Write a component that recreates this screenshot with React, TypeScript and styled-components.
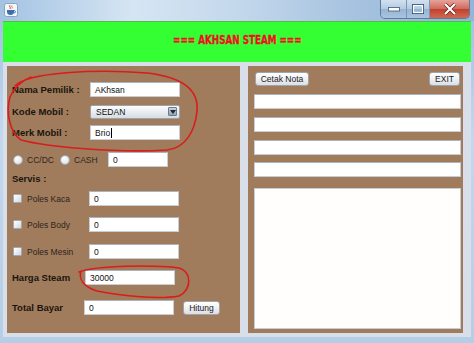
import React from 'react'
import styled, { createGlobalStyle } from 'styled-components'

const GlobalStyle = createGlobalStyle`
  html, body {
    margin: 0;
    padding: 0;
    background: #b9d1ea;
  }
  * {
    box-sizing: border-box;
  }
`

const App: React.FC = () => {
  return (
    <>
      <GlobalStyle />
      <StyledWindow>
        <StyledTitleBar>
          <JavaIcon />
          <StyledControls>
            <StyledControl $w={26}>
              <svg width='12' height='5' viewBox='0 0 12 5'>
                <rect x='0.5' y='0.5' width='11' height='3.5' fill='#fff' stroke='#3b5877' strokeWidth='0.8' />
              </svg>
            </StyledControl>
            <StyledControl $w={23}>
              <svg width='12' height='10' viewBox='0 0 12 10'>
                <rect x='1' y='1' width='10' height='8' fill='none' stroke='#3b5877' strokeWidth='2' />
                <rect x='1.5' y='1.5' width='9' height='7' fill='none' stroke='#fff' strokeWidth='1.2' />
              </svg>
            </StyledControl>
            <StyledClose>
              <svg width='14' height='12' viewBox='0 0 14 12'>
                <path d='M2 1 L12 11 M12 1 L2 11' stroke='#6b1f16' strokeWidth='3.6' />
                <path d='M2 1 L12 11 M12 1 L2 11' stroke='#fff' strokeWidth='2.2' />
              </svg>
            </StyledClose>
          </StyledControls>
        </StyledTitleBar>

        <StyledContent>
          <StyledHeader>
            <StyledTitle>=== AKHSAN STEAM ===</StyledTitle>
          </StyledHeader>

          <StyledBody>
            <StyledLeftPanel>
              <StyledRow $mt={16}>
                <StyledLabel $w={78}>Nama Pemilik :</StyledLabel>
                <StyledField $w={90}>AKhsan</StyledField>
              </StyledRow>
              <StyledRow $mt={7}>
                <StyledLabel $w={78}>Kode Mobil :</StyledLabel>
                <StyledCombo>
                  <span>SEDAN</span>
                  <StyledComboArrow>
                    <svg width='6' height='4' viewBox='0 0 6 4'>
                      <path d='M0 0 H6 L3 4 Z' fill='#1d2733' />
                    </svg>
                  </StyledComboArrow>
                </StyledCombo>
              </StyledRow>
              <StyledRow $mt={6}>
                <StyledLabel $w={78}>Merk Mobil :</StyledLabel>
                <StyledField $w={90}>Brio<StyledCaret /></StyledField>
              </StyledRow>

              <StyledRow $mt={12} $pl={6}>
                <StyledRadio />
                <StyledSmallText $w={33}>CC/DC</StyledSmallText>
                <StyledRadio />
                <StyledSmallText $w={34}>CASH</StyledSmallText>
                <StyledField $w={60}>0</StyledField>
              </StyledRow>

              <StyledRow $mt={4}>
                <StyledLabel $w={78}>Servis :</StyledLabel>
              </StyledRow>

              <StyledRow $mt={5} $pl={6}>
                <StyledCheck />
                <StyledSmallText $w={62}>Poles Kaca</StyledSmallText>
                <StyledField $w={90}>0</StyledField>
              </StyledRow>
              <StyledRow $mt={11} $pl={6}>
                <StyledCheck />
                <StyledSmallText $w={62}>Poles Body</StyledSmallText>
                <StyledField $w={90}>0</StyledField>
              </StyledRow>
              <StyledRow $mt={12} $pl={6}>
                <StyledCheck />
                <StyledSmallText $w={62}>Poles Mesin</StyledSmallText>
                <StyledField $w={90}>0</StyledField>
              </StyledRow>

              <StyledRow $mt={11}>
                <StyledLabel $w={73}>Harga Steam</StyledLabel>
                <StyledField $w={90}>30000</StyledField>
              </StyledRow>
              <StyledRow $mt={15}>
                <StyledLabel $w={72}>Total Bayar</StyledLabel>
                <StyledField $w={90}>0</StyledField>
                <StyledButton $w={37} $ml={9}>Hitung</StyledButton>
              </StyledRow>

              <StyledScribble width='233' height='267' viewBox='0 0 233 267'>
                <path
                  d='M8 20 C20 6, 90 3, 140 7 C175 11, 192 24, 190 45 C188 66, 178 82, 160 84 C110 87, 40 81, 14 74 C2 66, -1 45, 3 31 C7 22, 14 15, 24 11'
                />
                <path d='M72 206 C90 199, 150 199, 172 202 C185 206, 185 223, 172 230 C150 234, 110 229, 90 225 C78 221, 71 214, 74 205' />
              </StyledScribble>
            </StyledLeftPanel>

            <StyledRightPanel>
              <StyledButtonBar>
                <StyledButton $w={54}>Cetak Nota</StyledButton>
                <StyledButton $w={31}>EXIT</StyledButton>
              </StyledButtonBar>
              <StyledWideField $mt={8} />
              <StyledWideField $mt={8} />
              <StyledWideField $mt={8} />
              <StyledWideField $mt={7} />
              <StyledTextArea />
            </StyledRightPanel>
          </StyledBody>
        </StyledContent>
      </StyledWindow>
    </>
  )
}

const JavaIcon: React.FC = () => (
  <StyledIcon width='14' height='14' viewBox='0 0 14 14'>
    <rect x='0.5' y='0.5' width='13' height='13' rx='2' fill='#f3f6fa' stroke='#8aa3bf' />
    <path d='M6 2 C4.5 3.5, 7.5 4.5, 6 6' stroke='#e2572a' strokeWidth='1' fill='none' />
    <path d='M8 2.5 C7 3.5, 9 4.5, 8 5.5' stroke='#e2572a' strokeWidth='0.8' fill='none' />
    <path d='M3 7 H10 V9 C10 11, 8.5 12, 6.5 12 C4.5 12, 3 11, 3 9 Z' fill='#3b6fb0' />
    <path d='M10 7.5 C12 7.5, 12 10, 10 10' stroke='#3b6fb0' strokeWidth='0.9' fill='none' />
  </StyledIcon>
)

const StyledWindow = styled.div`
  width: 474px;
  height: 343px;
  display: flex;
  flex-direction: column;
  background: linear-gradient(180deg, #9fbfdf 0%, #c3d8ee 40%, #b5cde6 100%);
  font-family: 'Liberation Sans', Arial, sans-serif;
  overflow: hidden;
`

const StyledTitleBar = styled.div`
  height: 21px;
  flex: none;
  display: flex;
  justify-content: space-between;
  align-items: flex-start;
  padding: 0 4px 0 4px;
  background: linear-gradient(90deg, #a3c3e3 0%, #d6e5f3 28%, #c4d8ec 50%, #a6c2df 75%, #94b5d8 100%);
`

const StyledIcon = styled.svg`
  margin-top: 3px;
`

const StyledControls = styled.div`
  display: flex;
  height: 19px;
  border: 1px solid #5e7a99;
  border-top: 0;
  border-radius: 0 0 5px 5px;
  overflow: hidden;
`

const StyledControl = styled.div<{ $w: number }>`
  width: ${props => props.$w}px;
  height: 100%;
  display: flex;
  align-items: center;
  justify-content: center;
  background: linear-gradient(180deg, #d2e1f0 0%, #b3cae2 50%, #97b4d3 51%, #a9c4e0 100%);
  border-right: 1px solid #7c97b4;
`

const StyledClose = styled.div`
  width: 39px;
  height: 100%;
  display: flex;
  align-items: center;
  justify-content: center;
  background: linear-gradient(180deg, #e6a39a 0%, #d0685a 50%, #c0402e 51%, #d06a52 100%);
`

const StyledContent = styled.div`
  flex: 1;
  margin: 0 3px 6px 3px;
  display: flex;
  flex-direction: column;
  background: #d8dfe8;
`

const StyledHeader = styled.div`
  height: 41px;
  flex: none;
  display: flex;
  align-items: center;
  justify-content: center;
  padding-bottom: 5px;
  background: #33ff33;
  border-top: 1px solid #56b84f;
`

const StyledTitle = styled.div`
  font-family: 'DejaVu Sans Condensed', 'DejaVu Sans', sans-serif;
  font-weight: 700;
  font-size: 12.5px;
  color: #ee1122;
  -webkit-text-stroke: 0.4px #ee1122;
  transform: scaleX(0.78);
  white-space: nowrap;
`

const StyledBody = styled.div`
  flex: 1;
  display: grid;
  grid-template-columns: 233px 215px;
  column-gap: 8px;
  padding: 4px 8px 4px 4px;
`

const StyledLeftPanel = styled.div`
  position: relative;
  background: #a07c5c;
  display: flex;
  flex-direction: column;
`

const StyledRow = styled.div<{ $mt: number, $pl?: number }>`
  display: flex;
  align-items: center;
  height: 15px;
  margin-top: ${props => props.$mt}px;
  padding-left: ${props => props.$pl ?? 5}px;
`

const StyledLabel = styled.div<{ $w: number }>`
  width: ${props => props.$w}px;
  flex: none;
  font-size: 9.5px;
  font-weight: 700;
  color: #1c140e;
  white-space: nowrap;
`

const StyledSmallText = styled.div<{ $w: number }>`
  width: ${props => props.$w}px;
  flex: none;
  font-size: 8.5px;
  color: #2e2520;
  white-space: nowrap;
`

const StyledField = styled.div<{ $w: number }>`
  width: ${props => props.$w}px;
  height: 15px;
  flex: none;
  display: flex;
  align-items: center;
  padding-left: 4px;
  font-size: 8.5px;
  color: #111;
  background: #ffffff;
  border: 1px solid #c7ced6;
  border-top-color: #aab3bd;
`

const StyledCaret = styled.span`
  display: inline-block;
  width: 1px;
  height: 10px;
  margin-left: 1px;
  background: #000;
`

const StyledCombo = styled.div`
  width: 90px;
  height: 14px;
  flex: none;
  display: flex;
  align-items: center;
  justify-content: space-between;
  padding: 0 2px 0 5px;
  font-size: 8.5px;
  color: #111;
  background: linear-gradient(180deg, #fbfcfd 0%, #e9edf1 50%, #d6dce3 100%);
  border: 1px solid #9aa4ae;
  border-radius: 2px;
`

const StyledComboArrow = styled.div`
  width: 9px;
  height: 9px;
  display: flex;
  align-items: center;
  justify-content: center;
  background: linear-gradient(180deg, #c9d3de 0%, #94a3b4 100%);
  border: 1px solid #6c7a89;
  border-radius: 1px;
`

const StyledRadio = styled.div`
  width: 10px;
  height: 10px;
  flex: none;
  margin-right: 4px;
  border-radius: 50%;
  background: radial-gradient(circle at 40% 35%, #ffffff 0%, #e4e8ec 60%, #c9ced4 100%);
  border: 1px solid #a3a9b0;
`

const StyledCheck = styled.div`
  width: 9px;
  height: 9px;
  flex: none;
  margin-right: 5px;
  border-radius: 1px;
  background: linear-gradient(135deg, #ffffff 0%, #e1e5ea 70%, #cfd5dc 100%);
  border: 1px solid #a3a9b0;
`

const StyledButton = styled.div<{ $w: number, $ml?: number }>`
  width: ${props => props.$w}px;
  height: 14px;
  margin-left: ${props => props.$ml ?? 0}px;
  flex: none;
  display: flex;
  align-items: center;
  justify-content: center;
  font-size: 8.5px;
  color: #1b1b1b;
  background: linear-gradient(180deg, #ffffff 0%, #f1f2f4 45%, #dcdfe3 100%);
  border: 1px solid #a0a4a9;
  border-radius: 3px;
`

const StyledScribble = styled.svg`
  position: absolute;
  top: 0;
  left: 0;
  overflow: visible;
  pointer-events: none;
  fill: none;
  stroke: #d91c1c;
  stroke-width: 1.6;
  stroke-linecap: round;
`

const StyledRightPanel = styled.div`
  background: #a07c5c;
  display: flex;
  flex-direction: column;
  padding: 6px 2px 0 6px;
`

const StyledButtonBar = styled.div`
  display: flex;
  justify-content: space-between;
  height: 14px;
  padding: 0 1px 0 1px;
`

const StyledWideField = styled.div<{ $mt: number }>`
  height: 15px;
  margin-top: ${props => props.$mt}px;
  background: #ffffff;
  border: 1px solid #c7ced6;
  border-top-color: #aab3bd;
`

const StyledTextArea = styled.div`
  height: 141px;
  margin-top: 11px;
  background: #fffefc;
  border: 1px solid #c7ced6;
`

export default App
